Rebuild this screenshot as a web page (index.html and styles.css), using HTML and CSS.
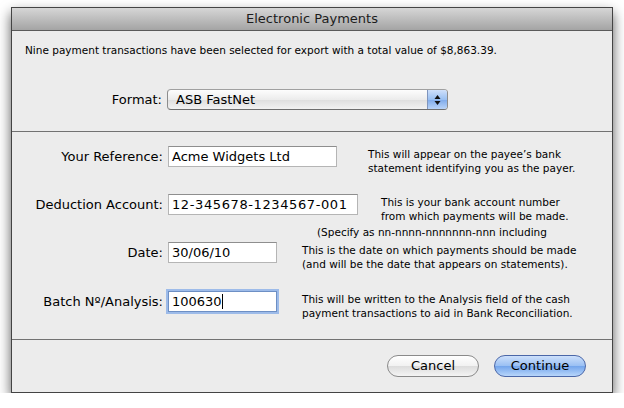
FILE: index.html
```html
<!DOCTYPE html>
<html lang="en">

<head>
    <meta charset="UTF-8">
    <meta name="viewport" content="width=device-width, initial-scale=1.0">
    <title>Electronic Payments</title>
    <link rel="stylesheet" href="styles.css">
</head>

<body>
    <div id="window" class="window">
        <header class="titlebar">Electronic Payments</header>

        <p class="intro">Nine payment transactions have been selected for export with a total value of $8,863.39.</p>

        <div class="format_row">
            <div class="label">Format:</div>
            <div class="popup">
                <span class="popup_value">ASB FastNet</span>
                <span class="popup_arrows">
                    <svg width="7" height="12" viewBox="0 0 7 12">
                        <path d="M3.5 1 L6.5 5 L0.5 5 Z" fill="#111" />
                        <path d="M3.5 11 L6.5 7 L0.5 7 Z" fill="#111" />
                    </svg>
                </span>
            </div>
        </div>

        <div class="divider"></div>

        <section class="fields">
            <div class="field row_ref">
                <div class="label">Your Reference:</div>
                <div class="textfield">Acme Widgets Ltd</div>
                <div class="help">This will appear on the payee’s bank<br>statement identifying you as the payer.</div>
            </div>
            <div class="field row_acct">
                <div class="label">Deduction Account:</div>
                <div class="textfield">12-345678-1234567-001</div>
                <div class="help">This is your bank account number<br>from which payments will be made.</div>
            </div>
            <div class="specify">(Specify as nn-nnnn-nnnnnnn-nnn including</div>
            <div class="field row_date">
                <div class="label">Date:</div>
                <div class="textfield">30/06/10</div>
                <div class="help">This is the date on which payments should be made<br>(and will be the date that appears on statements).</div>
            </div>
            <div class="field row_batch">
                <div class="label">Batch Nº/Analysis:</div>
                <div class="textfield focused">100630<span class="caret"></span></div>
                <div class="help">This will be written to the Analysis field of the cash<br>payment transactions to aid in Bank Reconciliation.</div>
            </div>
        </section>

        <div class="divider"></div>

        <footer class="buttons">
            <div class="btn">Cancel</div>
            <div class="btn btn_default">Continue</div>
        </footer>
    </div>
</body>

</html>
```

FILE: styles.css
```css
* {
    margin: 0;
    padding: 0;
    box-sizing: border-box;
}

body {
    background-color: #fff;
    font-family: "DejaVu Sans", "Liberation Sans", sans-serif;
    color: #000;
}

.window {
    margin: 7px 0 0 11px;
    width: 602px;
    height: 386px;
    border: 1px solid #444;
    background-color: #ececec;
    box-shadow: 0 6px 12px rgba(0, 0, 0, .65);
    display: flex;
    flex-direction: column;
}

.titlebar {
    height: 23px;
    border-bottom: 1px solid #5a5a5a;
    background: linear-gradient(#d6d6d6, #a4a4a4);
    text-align: center;
    font-size: 13px;
    line-height: 22px;
    color: #1c1c1c;
}

.intro {
    font-size: 10.5px;
    line-height: 14px;
    padding: 12px 0 0 13px;
}

.label {
    width: 151px;
    text-align: right;
    font-size: 13px;
    line-height: 21px;
    margin-right: 5px;
    flex-shrink: 0;
}

/* format popup */
.format_row {
    display: flex;
    margin-top: 32px;
}

.format_row .label {
    width: 150px;
}

.popup {
    width: 281px;
    height: 21px;
    border: 1px solid #8c8c8c;
    border-top-color: #a0a0a0;
    border-bottom-color: #6e6e6e;
    border-radius: 4px;
    background: linear-gradient(#fdfdfd, #ececec 50%, #dedede 51%, #f2f2f2);
    display: flex;
    overflow: hidden;
}

.popup_value {
    flex: 1;
    font-size: 13px;
    line-height: 19px;
    padding-left: 8px;
}

.popup_arrows {
    width: 20px;
    border-left: 1px solid #7f95bd;
    background: linear-gradient(#cfe0fa, #9ac0f2 50%, #7eaaea 51%, #b9d4f8);
    display: flex;
    align-items: center;
    justify-content: center;
}

.divider {
    height: 1px;
    background-color: #727272;
    margin-top: 21px;
}

/* text fields */
.fields {
    padding-top: 14px;
}

.field {
    display: flex;
    align-items: flex-start;
    height: 28px;
}

.textfield {
    height: 21px;
    background-color: #fff;
    border: 1px solid #b5b5b5;
    border-top-color: #8e8e8e;
    font-size: 13px;
    line-height: 19px;
    padding-left: 3px;
    flex-shrink: 0;
    white-space: nowrap;
}

.textfield.focused {
    border-color: #6d8fc4;
    box-shadow: 0 0 0 2px #9dbbe9;
}

.caret {
    display: inline-block;
    width: 1px;
    height: 15px;
    background-color: #000;
    vertical-align: -3px;
}

.help {
    font-size: 10.5px;
    line-height: 14px;
    white-space: nowrap;
    padding-top: 1px;
}

.row_ref .textfield {
    width: 169px;
}

.row_ref .help {
    margin-left: 31px;
}

.row_acct {
    margin-top: 20px;
}

.row_acct .textfield {
    width: 190px;
    letter-spacing: .6px;
}

.row_acct .help {
    margin-left: 23px;
}

.specify {
    font-size: 10.5px;
    line-height: 14px;
    margin: 3px 0 0 305px;
    white-space: nowrap;
}

.row_date {
    margin-top: 3px;
}

.row_batch {
    margin-top: 21px;
}

.row_date .textfield,
.row_batch .textfield {
    width: 109px;
}

.row_date .help,
.row_batch .help {
    margin-left: 25px;
}

.fields + .divider {
    margin-top: 20px;
}

/* buttons */
.buttons {
    display: flex;
    justify-content: flex-end;
    padding: 15px 26px 0 0;
}

.btn {
    width: 92px;
    height: 22px;
    margin-left: 15px;
    border: 1px solid #8a8a8a;
    border-radius: 11px;
    background: linear-gradient(#ffffff, #f1f1f1 50%, #dcdcdc 51%, #f4f4f4);
    font-size: 13px;
    line-height: 20px;
    text-align: center;
}

.btn_default {
    border-color: #4b67a8;
    background: linear-gradient(#cde0fb, #99bff3 50%, #73a5ec 51%, #b8d6fb);
}
```
